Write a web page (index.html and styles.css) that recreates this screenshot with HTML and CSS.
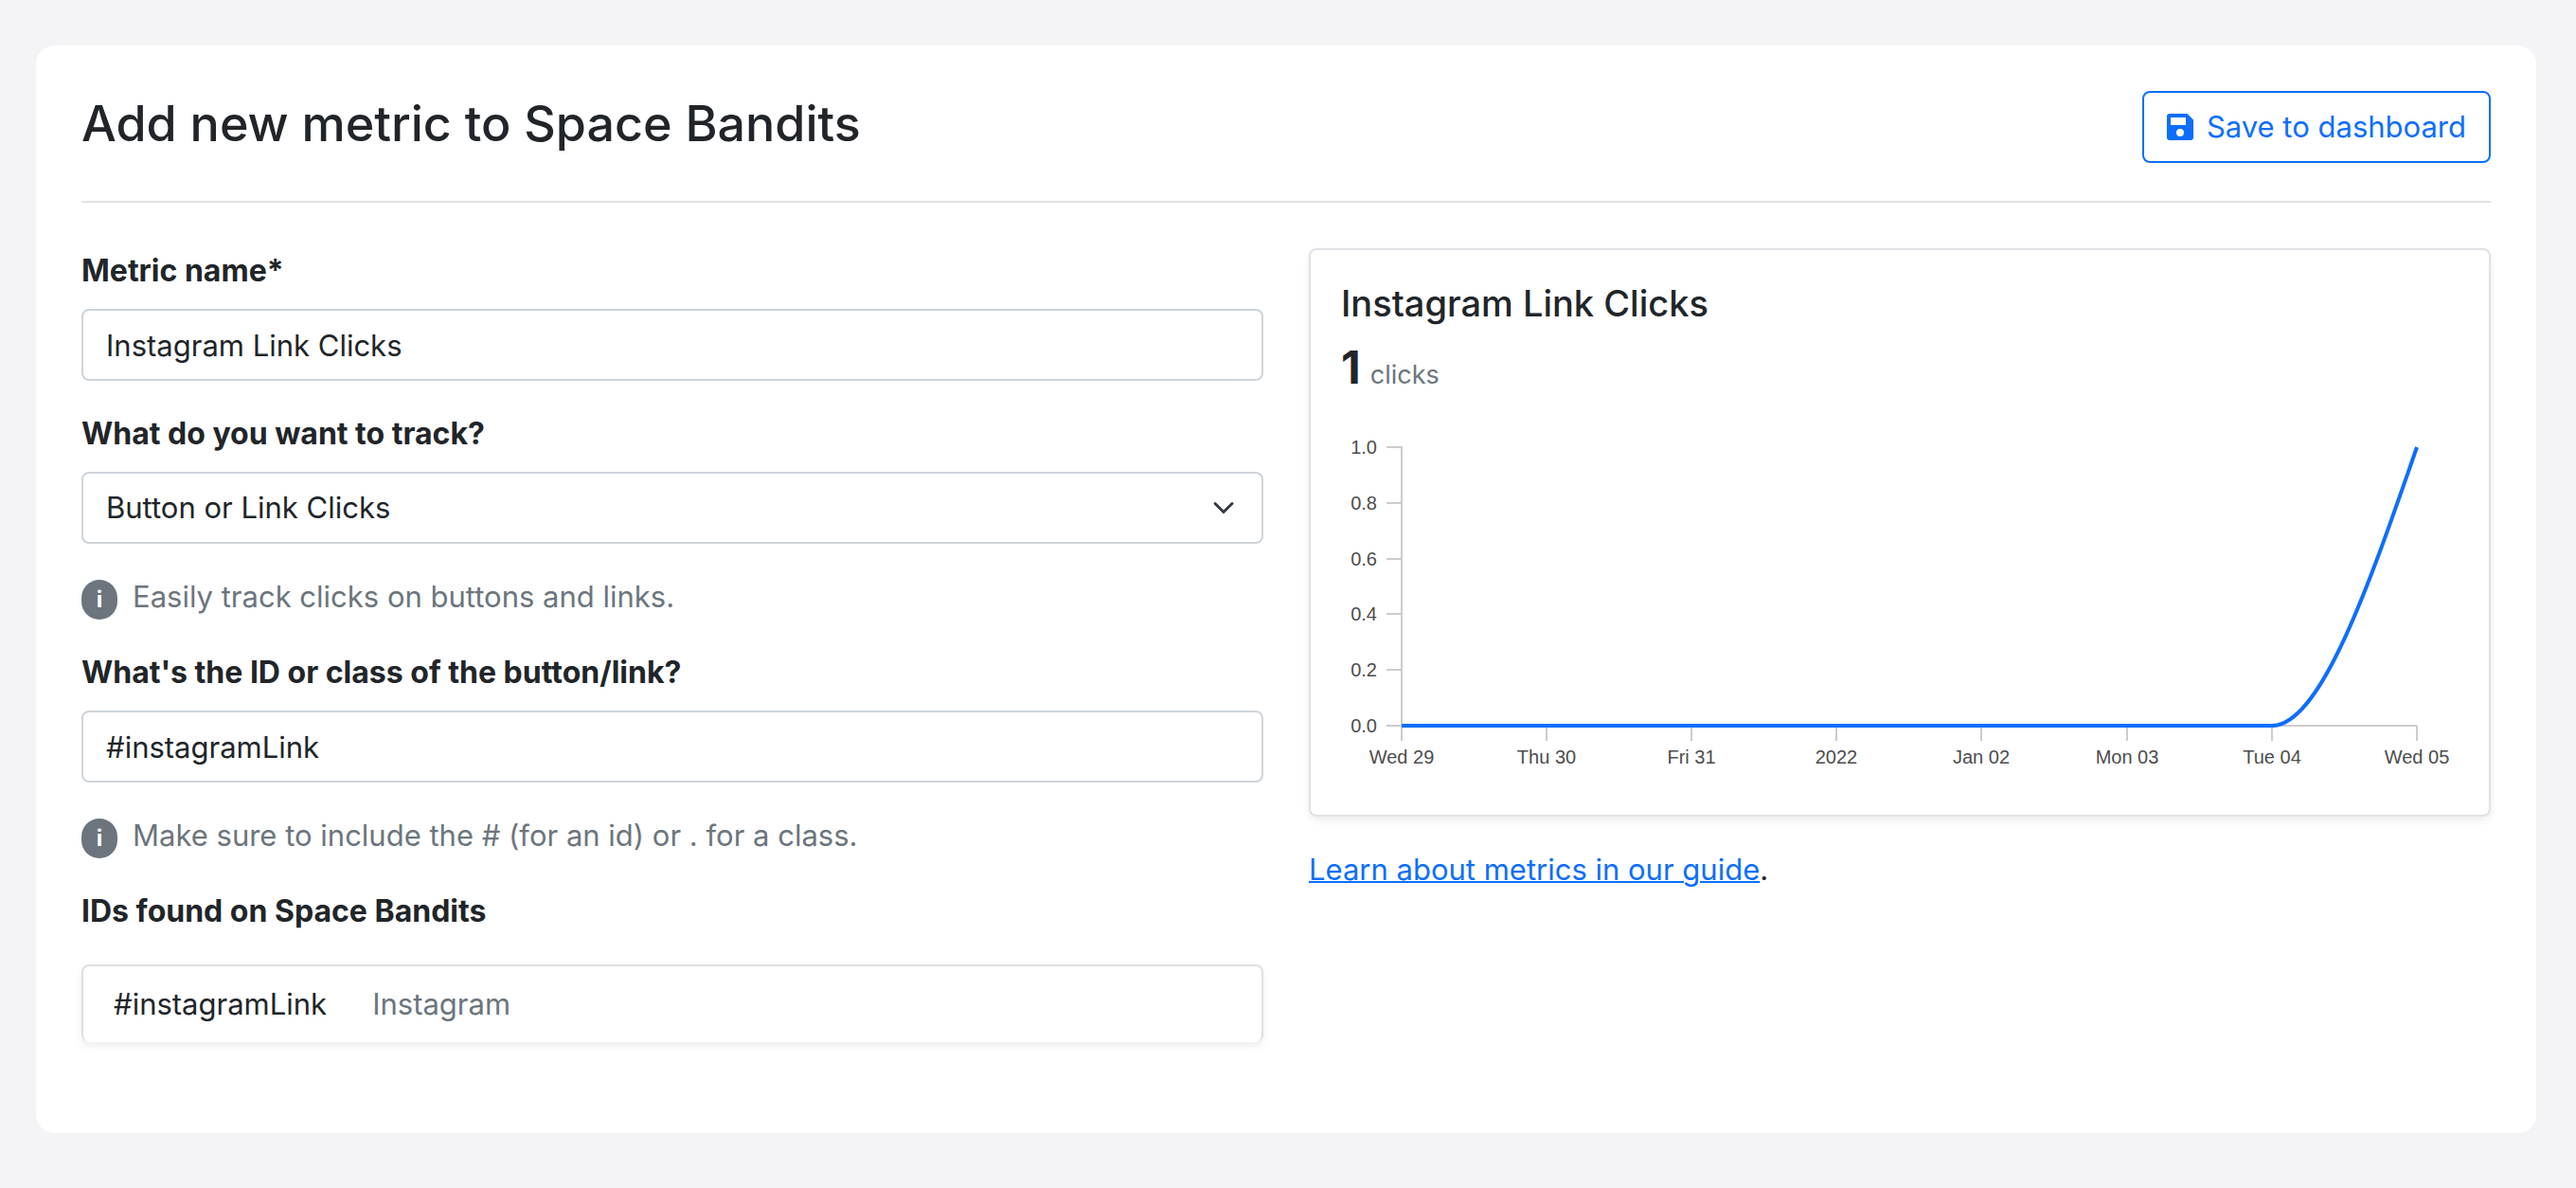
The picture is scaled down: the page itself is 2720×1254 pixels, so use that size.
FILE: index.html
```html
<!DOCTYPE html>
<html lang="en">
<head>
<meta charset="utf-8">
<title>Add new metric to Space Bandits</title>
<link rel="stylesheet" href="styles.css">
</head>
<body>
<main class="panel">
  <header class="panel-header">
    <h1 class="panel-title">Add new metric to Space Bandits</h1>
    <button class="save-button" type="submit" form="metric-form">
      <svg class="save-icon" viewBox="0 0 28 28" aria-hidden="true"><path fill="currentColor" fill-rule="evenodd" d="M3 0H21.500L28 6.500V25Q28 28 25 28H3Q0 28 0 25V3Q0 0 3 0ZM4 4V12H20V4ZM14 16a4 4 0 1 0 0 8a4 4 0 1 0 0-8Z"/></svg>
      <span>Save to dashboard</span>
    </button>
  </header>
  <div class="columns">
    <form class="fields" id="metric-form">
      <div class="field">
        <label class="label" for="metric-name">Metric name*</label>
        <input class="control" id="metric-name" type="text" value="Instagram Link Clicks">
      </div>
      <div class="field">
        <label class="label" for="metric-type">What do you want to track?</label>
        <div class="select-wrap">
          <select class="control" id="metric-type"><option>Button or Link Clicks</option></select>
          <svg class="chevron" viewBox="0 0 16 16" aria-hidden="true"><path fill="none" stroke="#343a40" stroke-linecap="round" stroke-linejoin="round" stroke-width="2" d="M2 5l6 6 6-6"/></svg>
        </div>
      </div>
      <p class="hint"><span class="info">i</span>Easily track clicks on buttons and links.</p>
      <div class="field">
        <label class="label" for="selector">What's the ID or class of the button/link?</label>
        <input class="control" id="selector" type="text" value="#instagramLink">
      </div>
      <p class="hint"><span class="info">i</span>Make sure to include the # (for an id) or . for a class.</p>
      <h2 class="label">IDs found on Space Bandits</h2>
      <ul class="id-list">
        <li class="id-item"><span>#instagramLink</span><span class="muted">Instagram</span></li>
      </ul>
    </form>
    <section class="preview">
      <article class="chart-card">
        <h2 class="chart-title">Instagram Link Clicks</h2>
        <p class="total"><strong class="total-value">1</strong><span class="muted">clicks</span></p>
        <svg class="chart" viewBox="0 0 1180 380" role="img" aria-label="Clicks per day">
          <g class="axis">
            <path d="M48 24H64V318M48 83H64M48 142H64M48 200H64M48 259H64M48 318H1136M64 318V334M217 318V334M370 318V334M523 318V334M676 318V334M830 318V334M983 318V334M1136 318V334"/>
          </g>
          <g class="tick-y">
            <text x="38" y="31">1.0</text><text x="38" y="90">0.8</text><text x="38" y="149">0.6</text><text x="38" y="207">0.4</text><text x="38" y="266">0.2</text><text x="38" y="325">0.0</text>
          </g>
          <g class="tick-x">
            <text x="64" y="358">Wed 29</text><text x="217" y="358">Thu 30</text><text x="370" y="358">Fri 31</text><text x="523" y="358">2022</text><text x="676" y="358">Jan 02</text><text x="830" y="358">Mon 03</text><text x="983" y="358">Tue 04</text><text x="1136" y="358">Wed 05</text>
          </g>
          <path class="series" d="M64 318H983C1034 318 1085 171 1136 24"/>
        </svg>
      </article>
      <p class="guide"><a class="guide-link" href="#guide">Learn about metrics in our guide</a>.</p>
    </section>
  </div>
</main>
</body>
</html>
```
FILE: styles.css
```css
* { box-sizing: border-box; }

body {
  margin: 0;
  padding: 48px 42px 48px 38px;
  background: #f4f4f7;
  color: #212529;
  font-family: Inter, "Liberation Sans", sans-serif;
  font-size: 31px;
  line-height: 48px;
}

h1, h2, p, ul { margin: 0; padding: 0; }

.panel {
  padding: 48px 48px 96px;
  border-radius: 20px;
  background: #fff;
}

.panel-header {
  display: flex;
  align-items: flex-start;
  justify-content: space-between;
  padding-bottom: 40px;
  border-bottom: 2px solid #dee2e6;
}

.panel-title {
  font-size: 52px;
  font-weight: 500;
  line-height: 70px;
}

.save-button {
  display: flex;
  align-items: center;
  gap: 14px;
  padding: 12px 24px;
  border: 2px solid #0d6efd;
  border-radius: 8px;
  background: #fff;
  color: #0d6efd;
  font: inherit;
}

.save-icon { width: 28px; height: 28px; }

.columns {
  display: grid;
  grid-template-columns: 1fr 1fr;
  align-items: start;
  gap: 48px;
  padding-top: 48px;
}

.fields {
  display: flex;
  flex-direction: column;
  gap: 32px;
}

.field {
  display: flex;
  flex-direction: column;
  gap: 16px;
}

.label {
  font-size: 32px;
  font-weight: 700;
  line-height: 48px;
}

.control {
  display: block;
  width: 100%;
  height: 76px;
  padding: 12px 24px;
  border: 2px solid #ced4da;
  border-radius: 8px;
  background: #fff;
  color: #212529;
  font: inherit;
  appearance: none;
}

.select-wrap { position: relative; }

.chevron {
  position: absolute;
  top: 26px;
  right: 30px;
  width: 24px;
  height: 24px;
  pointer-events: none;
}

.hint {
  display: flex;
  align-items: flex-end;
  gap: 16px;
  color: #6c757d;
}

.info {
  width: 38px;
  height: 42px;
  border-radius: 19px;
  background: #6c757d;
  color: #fff;
  font-size: 24px;
  font-weight: 700;
  line-height: 42px;
  text-align: center;
}

.id-list {
  border: 2px solid #dfdfdf;
  border-bottom: 0;
  border-radius: 8px;
  box-shadow: 0 4px 8px rgba(0, 0, 0, 0.075);
  list-style: none;
}

.id-item {
  display: flex;
  gap: 48px;
  padding: 16px 32px;
}

.muted { color: #6c757d; }

.chart-card {
  padding: 32px;
  border: 2px solid #dee2e6;
  border-radius: 8px;
  box-shadow: 0 4px 8px rgba(0, 0, 0, 0.075);
}

.chart-title {
  font-size: 38px;
  font-weight: 500;
  line-height: 48px;
}

.total {
  display: flex;
  align-items: baseline;
  gap: 10px;
  padding: 8px 0 16px;
  font-size: 27px;
  line-height: 72px;
}

.total-value { font-size: 48px; }

.chart {
  display: block;
  width: 100%;
  font-family: "Liberation Sans", Arial, sans-serif;
  font-size: 20px;
}

.axis { fill: none; stroke: #ccc; stroke-width: 2px; }
.tick-x, .tick-y { fill: #4d4d4d; }
.tick-x { text-anchor: middle; }
.tick-y { text-anchor: end; }
.series { fill: none; stroke: #0d6efd; stroke-width: 4px; }

.guide { padding-top: 32px; }

.guide-link {
  color: #0d6efd;
  text-decoration-thickness: 2px;
}
```
